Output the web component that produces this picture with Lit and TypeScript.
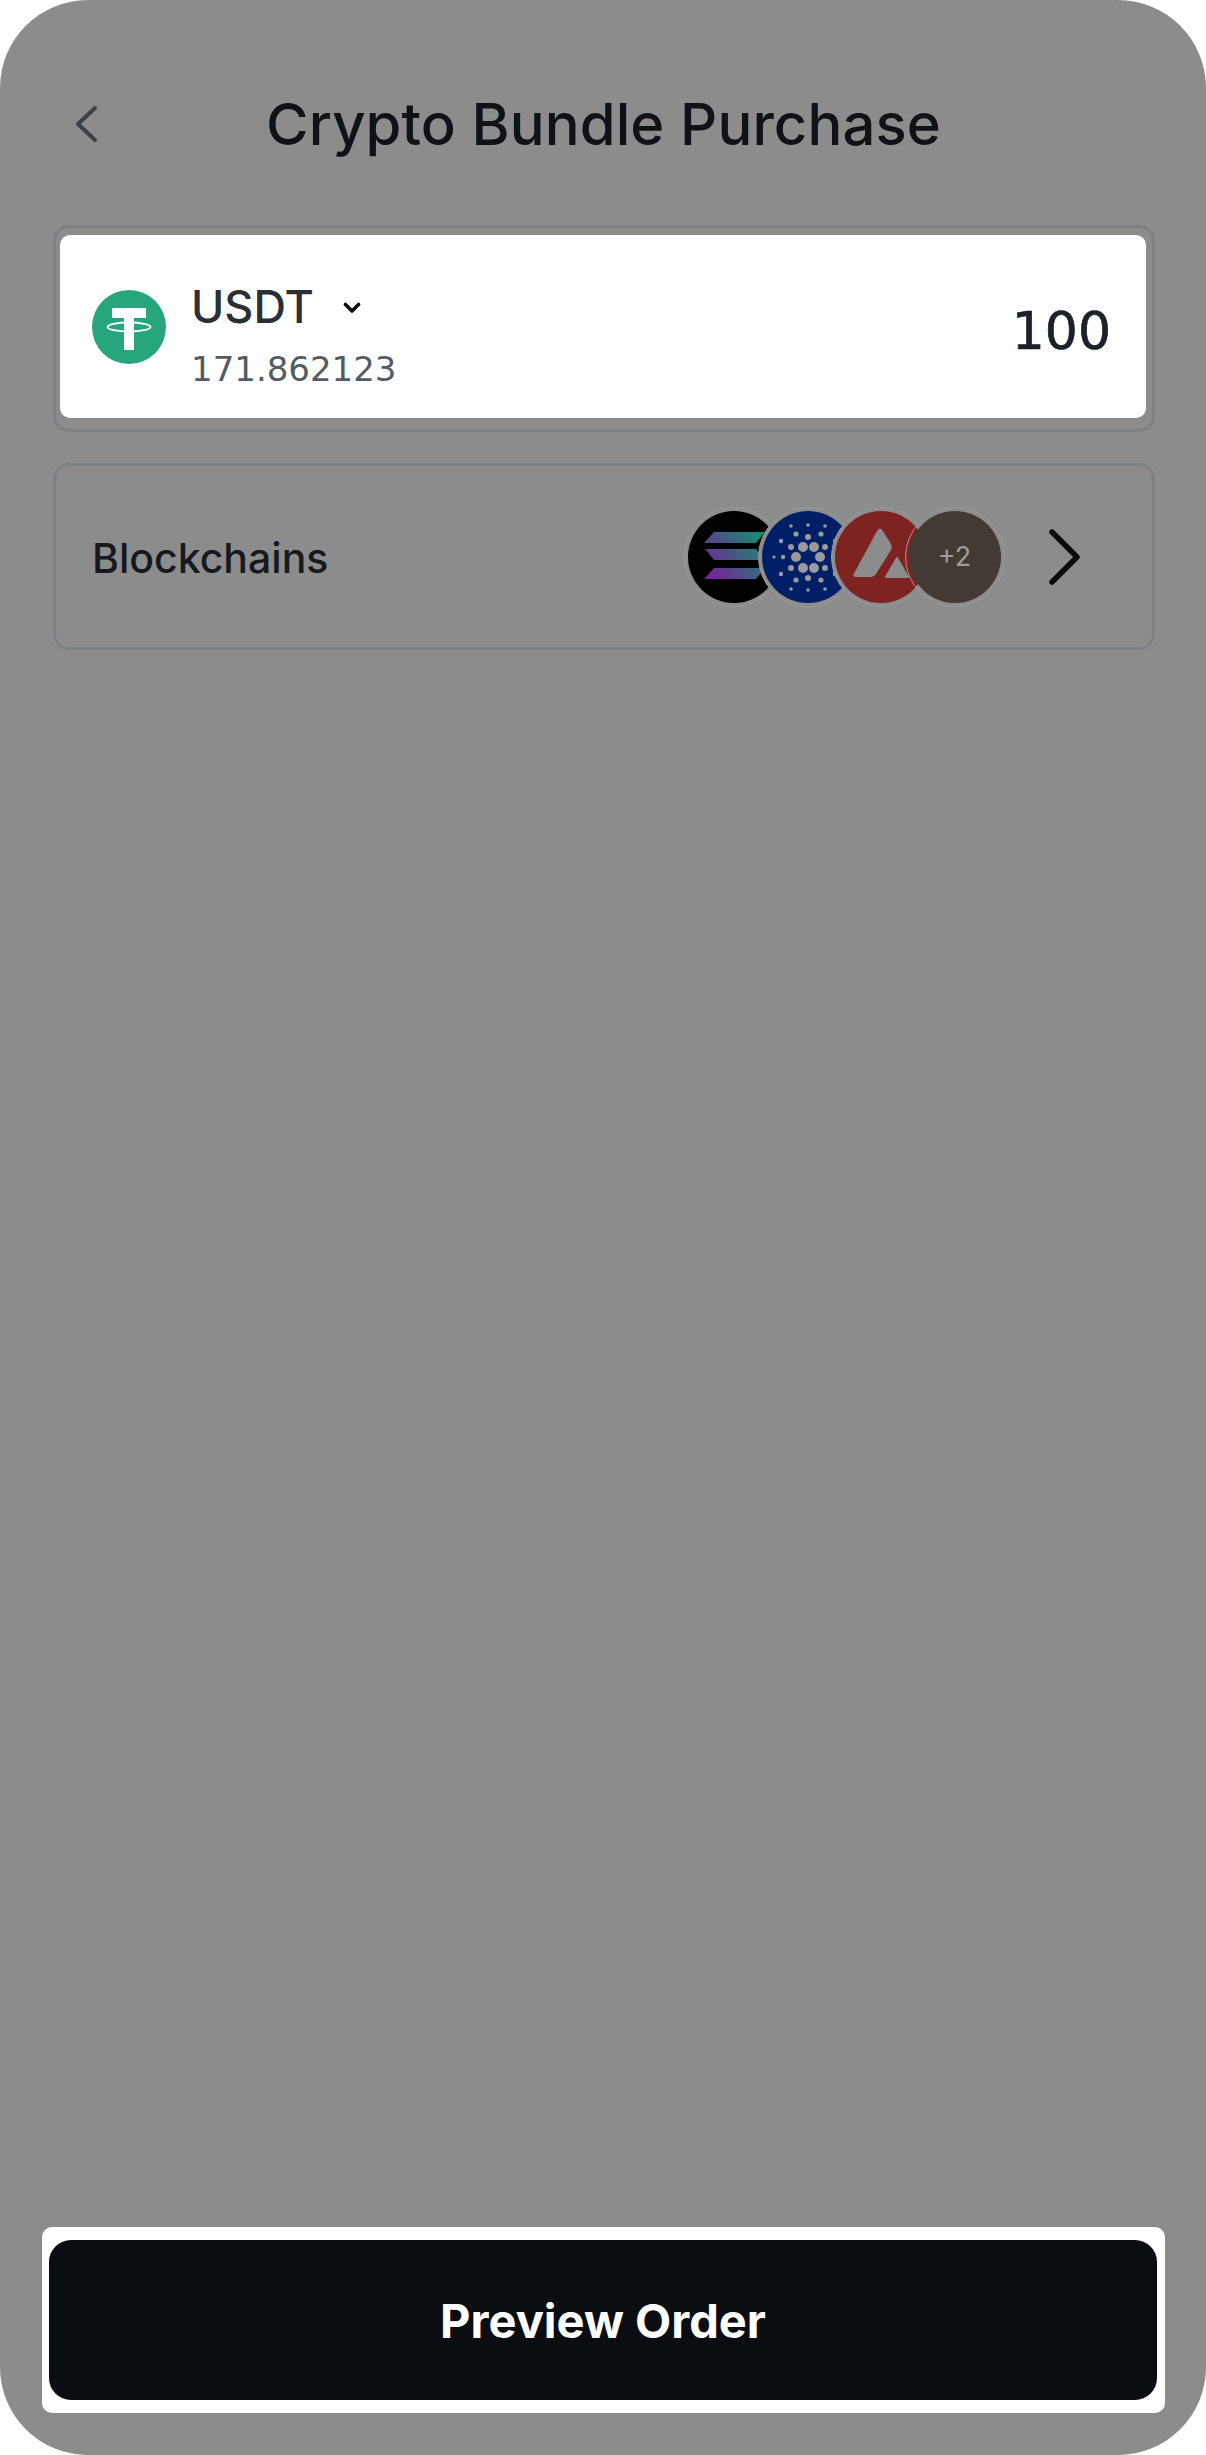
import { LitElement, css, html, svg } from "lit";
import { customElement } from "lit/decorators.js";

// x, y, r of the Cardano dots, relative to the logo centre
const CARDANO_DOTS = [
  [-5, -10, 5], [6, -10, 5], [-12, 0, 5], [12, 0, 5], [-5, 11, 5], [6, 11, 5],
  [-17, -10, 3], [17, -10, 3], [0, -20, 3], [-17, 11, 3], [17, 11, 3], [0, 21, 3],
  [-25, 0, 2.2], [25, 0, 2.2],
  [-12, -23, 2.6], [13, -23, 2.6], [-12, 23, 2.6], [13, 23, 2.6],
  [-27, -16, 2.2], [27, -16, 2.2], [-27, 17, 2.2], [27, 17, 2.2],
  [-17, -31, 1.8], [0, -32, 1.8], [17, -31, 1.8], [-17, 32, 1.8], [0, 33, 1.8], [17, 32, 1.8],
  [-34, 0, 1.6], [34, 0, 1.6],
];

@customElement("app-root")
export class AppRoot extends LitElement {
  render() {
    return html`<div class="screen">
      <header class="header">
        <svg class="back" viewBox="0 0 24 40" fill="none">
          <path d="M20 4 3 20l17 16" stroke="#3a4046" stroke-width="4" stroke-linecap="round" stroke-linejoin="round" />
        </svg>
        <h1 class="title">Crypto Bundle Purchase</h1>
      </header>

      <section class="card amount-card">
        <div class="amount-inner">
          <svg class="token" viewBox="0 0 74 74">
            <circle cx="37" cy="37" r="37" fill="#27a67e" />
            <path d="M20 18h34v10H42v9H32v-9H20z" fill="#fff" />
            <rect x="32" y="37" width="10" height="23" fill="#fff" />
            <ellipse cx="37" cy="37" rx="21.500" ry="4.500" fill="none" stroke="#fff" stroke-width="1.800" />
          </svg>
          <div class="token-text">
            <div class="token-name">
              <span>USDT</span>
              <svg class="caret" viewBox="0 0 18 12" fill="none">
                <path d="M2.500 2.500 9 9l6.500-6.500" stroke="#0b0b0b" stroke-width="3.600" stroke-linecap="round" stroke-linejoin="round" />
              </svg>
            </div>
            <div class="balance">171.862123</div>
          </div>
          <div class="amount">100</div>
        </div>
      </section>

      <section class="card chains-card">
        <span class="chains-label">Blockchains</span>
        <div class="avatars">
          <div class="avatar">
            <svg viewBox="0 0 92 92">
              <defs>
                <linearGradient id="sol" gradientUnits="userSpaceOnUse" x1="17" y1="68" x2="77" y2="21">
                  <stop offset="0" stop-color="#7d1a9c" />
                  <stop offset="1" stop-color="#10956c" />
                </linearGradient>
              </defs>
              <circle cx="46" cy="46" r="46" fill="#000" />
              <g fill="url(#sol)">
                <path d="M17 31l9-10h51l-9 11H17z" />
                <path d="M17 38h51l8 11H26z" />
                <path d="M17 67l9-10h51l-9 11H17z" />
              </g>
            </svg>
          </div>
          <div class="avatar">
            <svg viewBox="0 0 92 92">
              <circle cx="46" cy="46" r="46" fill="#001f66" />
              ${CARDANO_DOTS.map(
                ([x, y, r]) => svg`<circle cx=${46 + x} cy=${46 + y} r=${r} fill="#9a9a9a" />`,
              )}
            </svg>
          </div>
          <div class="avatar">
            <svg viewBox="0 0 92 92">
              <circle cx="46" cy="46" r="46" fill="#7f2222" />
              <path d="M21 66q-4 0-2-3.500L42 20q3-5 6 0l8 13q1.500 3 0 6L41 63q-2 3-5 3z" fill="#8c8c8c" />
              <path d="M51 66l11-19 11 19z" fill="#8c8c8c" stroke="#8c8c8c" stroke-width="2" stroke-linejoin="round" />
            </svg>
          </div>
          <div class="avatar more">+2</div>
        </div>
        <svg class="forward" viewBox="0 0 32 56" fill="none">
          <path d="M4 3l25 25L4 53" stroke="#0b0b0b" stroke-width="5.500" stroke-linecap="round" stroke-linejoin="round" />
        </svg>
      </section>

      <footer class="footer">
        <button class="preview">Preview Order</button>
      </footer>
    </div>`;
  }

  static styles = css`
    :host {
      display: block;
      background: #fff;
      font-family: Inter, "Liberation Sans", sans-serif;
    }

    .screen {
      box-sizing: border-box;
      height: 2455px;
      display: flex;
      flex-direction: column;
      padding: 0 41px 42px 42px;
      background: #8c8c8c;
      border-radius: 88px;
    }

    .header {
      box-sizing: border-box;
      display: flex;
      align-items: center;
      justify-content: center;
      position: relative;
      height: 225px;
      padding-top: 23px;
    }

    .back {
      position: absolute;
      left: 33px;
      top: 104px;
      width: 24px;
      height: 40px;
    }

    .title {
      margin: 0;
      font-size: 58px;
      font-weight: 500;
      letter-spacing: 0.1px;
      color: #0f1318;
    }

    .card {
      box-sizing: border-box;
      margin: 0 10px 0 11px;
      border: 3px solid #7c8184;
      border-radius: 16px;
    }

    .amount-card {
      height: 207px;
      padding: 7px 6px 11px 4px;
    }

    .amount-inner {
      height: 100%;
      display: flex;
      align-items: center;
      padding: 0 35px 0 32px;
      background: #fff;
      border-radius: 10px;
    }

    .token {
      width: 74px;
      height: 74px;
      margin-right: 25px;
      flex: none;
    }

    .token-text {
      flex: 1;
      padding-top: 16px;
    }

    .token-name {
      display: flex;
      align-items: center;
      gap: 29px;
      font-size: 45px;
      font-weight: 500;
      line-height: 56px;
      color: #2a2f36;
    }

    .caret {
      width: 18px;
      height: 12px;
      margin-top: 2px;
    }

    .balance {
      margin-top: 13px;
      font-family: "DejaVu Sans", sans-serif;
      font-size: 34px;
      line-height: 42px;
      color: #535b65;
    }

    .amount {
      padding-top: 8px;
      font-family: "DejaVu Sans", sans-serif;
      font-size: 52px;
      color: #1c2127;
      -webkit-text-stroke: 0.7px #1c2127;
    }

    .chains-card {
      height: 187px;
      margin-top: 31px;
      display: flex;
      align-items: center;
      padding: 0 72px 0 36px;
    }

    .chains-label {
      flex: 1;
      padding-top: 2px;
      font-size: 41px;
      font-weight: 500;
      color: #16191e;
    }

    .avatars {
      display: flex;
      margin-right: 43.5px;
    }

    .avatar {
      box-sizing: border-box;
      width: 100px;
      height: 100px;
      margin-left: -26.5px;
      padding: 3px;
      border-radius: 50%;
      background: #8c8c8c;
      border: 1px solid #9a9a9a;
      flex: none;
    }

    .avatar svg {
      display: block;
      width: 100%;
      height: 100%;
    }

    .more {
      display: flex;
      align-items: center;
      justify-content: center;
      background: #433a34 content-box;
      font-size: 27px;
      color: #a09c98;
    }

    .forward {
      width: 32px;
      height: 56px;
      flex: none;
    }

    .footer {
      margin-top: auto;
      box-sizing: border-box;
      height: 186px;
      padding: 13px 8px 13px 7px;
      background: #fff;
      border-radius: 10px;
    }

    .preview {
      display: block;
      width: 100%;
      height: 100%;
      border: 0;
      border-radius: 22px;
      background: #0a0d11;
      color: #fff;
      font-family: inherit;
      font-size: 47px;
      font-weight: 700;
    }
  `;
}

declare global {
  interface HTMLElementTagNameMap {
    "app-root": AppRoot;
  }
}
